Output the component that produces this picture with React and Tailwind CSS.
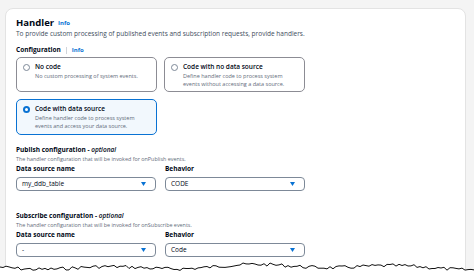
import React from 'react';

const FONT = { fontFamily: '"Open Sans", "Noto Sans", Arial, sans-serif' };

// jagged "torn paper" line along the bottom of the shot
function tornPoints() {
  const pts = [];
  let seed = 7;
  const rnd = () => {
    seed = (seed * 9301 + 49297) % 233280;
    return seed / 233280;
  };
  for (let x = 0; x <= 474; x += 3) {
    const base = 5 + Math.sin(x / 23) * 1.6 + Math.sin(x / 61) * 1.2;
    pts.push([x, base + (rnd() - 0.5) * 3.4]);
  }
  return pts;
}

const TORN = tornPoints();
const TORN_LINE = TORN.map(([x, y]) => `${x},${y.toFixed(1)}`).join(' ');
const TORN_FILL = `0,12 ${TORN_LINE} 474,12`;

function Info() {
  return <span className="text-[6px] font-bold text-[#0972d3]">Info</span>;
}

function RadioCard({ label, desc, checked }) {
  return (
    <div
      className={
        'flex gap-[5px] rounded-[5px] border pl-[6px] pr-2 pt-[5px] ' +
        (checked
          ? 'border-[#0972d3] bg-[#f2f8fd] h-[36px]'
          : 'border-[#8c8c94] bg-white h-[35px]')
      }
    >
      <div className="pt-[1px]">
        {checked ? (
          <div className="flex h-[7px] w-[7px] items-center justify-center rounded-full bg-[#0972d3]">
            <div className="h-[3px] w-[3px] rounded-full bg-white" />
          </div>
        ) : (
          <div className="h-[7px] w-[7px] rounded-full border border-[#7d8998] bg-white" />
        )}
      </div>
      <div>
        <div className="text-[6.5px] font-semibold leading-[8px] text-[#000716]">{label}</div>
        <div className="mt-[1px] text-[5.5px] leading-[8px] text-[#5f6b7a]">{desc}</div>
      </div>
    </div>
  );
}

function SelectBox({ value }) {
  return (
    <div className="flex h-[14px] items-center justify-between rounded-[4px] border border-[#7d8998] bg-white pl-[5px] pr-[9px]">
      <span className="text-[6.5px] text-[#000716]">{value}</span>
      <svg width="5" height="4" viewBox="0 0 5 4">
        <path d="M0 0 L5 0 L2.5 4 Z" fill="#0972d3" />
      </svg>
    </div>
  );
}

function HandlerSection({ title, desc, source, behavior, top }) {
  return (
    <div className={top}>
      <div className="text-[6.5px] font-bold leading-[8px] text-[#000716]">
        {title} - <i className="font-semibold">optional</i>
      </div>
      <div className="mt-[1px] text-[5.4px] leading-[8px] text-[#5f6b7a]">{desc}</div>
      <div className="mt-[2px] grid w-[289px] grid-cols-[140px_140px] gap-x-[9px]">
        <div className="text-[6.5px] font-bold leading-[8px] text-[#000716]">Data source name</div>
        <div className="text-[6.5px] font-bold leading-[8px] text-[#000716]">Behavior</div>
        <div className="mt-[4px]">
          <SelectBox value={source} />
        </div>
        <div className="mt-[4px]">
          <SelectBox value={behavior} />
        </div>
      </div>
    </div>
  );
}

export default function App() {
  return (
    <div className="relative h-[274px] w-[474px] overflow-hidden bg-[#f4f4f4]" style={FONT}>
      <div className="ml-[5px] mt-[8px] h-[300px] w-[461px] rounded-[8px] border border-[#e3e3e3] bg-white pl-[10px] pt-[7px]">
        <div className="flex h-[14px] items-center gap-[4px]">
          <span className="text-[9.5px] font-bold text-[#000716]">Handler</span>
          <Info />
        </div>
        <div className="text-[6.5px] leading-[8px] text-[#414d5c]">
          To provide custom processing of published events and subscription requests, provide handlers.
        </div>

        <div className="mt-[8px] flex h-[8px] items-center gap-[5px]">
          <span className="text-[6.5px] font-bold text-[#000716]">Configuration</span>
          <span className="h-[7px] w-px bg-[#d1d5db]" />
          <Info />
        </div>

        <div className="mt-[3px] grid w-[289px] grid-cols-[141px_141px] gap-x-[7px] gap-y-[7px]">
          <RadioCard label="No code" desc={<>No custom processing of system events.</>} />
          <RadioCard
            label="Code with no data source"
            desc={<>Define handler code to process system<br />events without accessing a data source.</>}
          />
          <RadioCard
            checked
            label="Code with data source"
            desc={<>Define handler code to process system<br />events and access your data source.</>}
          />
        </div>

        <HandlerSection
          top="mt-[11px]"
          title="Publish configuration"
          desc="The handler configuration that will be invoked for onPublish events."
          source="my_ddb_table"
          behavior="CODE"
        />
        <HandlerSection
          top="mt-[21px]"
          title="Subscribe configuration"
          desc="The handler configuration that will be invoked for onSubscribe events."
          source="-"
          behavior="Code"
        />
      </div>

      <svg className="absolute bottom-0 left-0" width="474" height="12" viewBox="0 0 474 12">
        <polygon points={TORN_FILL} fill="#ffffff" />
        <polyline points={TORN_LINE} fill="none" stroke="#111" strokeWidth="1" />
      </svg>
    </div>
  );
}
